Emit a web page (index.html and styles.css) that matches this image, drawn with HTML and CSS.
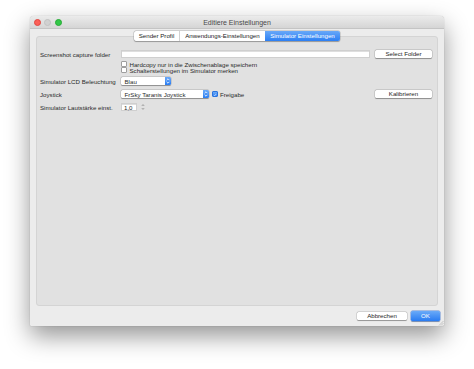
FILE: index.html
```html
<!DOCTYPE html>
<html lang="de">
<head>
<meta charset="utf-8">
<title>Editiere Einstellungen</title>
<link rel="stylesheet" href="styles.css">
</head>
<body>
<div class="stage">
  <div class="window">
    <div class="titlebar">
      <div class="lights">
        <span class="light red"></span>
        <span class="light gray"></span>
        <span class="light green"></span>
      </div>
      <div class="title">Editiere Einstellungen</div>
      <div></div>
    </div>
    <div class="tabs">
      <div class="tab">Sender Profil</div>
      <div class="tab">Anwendungs-Einstellungen</div>
      <div class="tab active">Simulator Einstellungen</div>
    </div>
    <div class="panel">
      <div class="row r1">
        <div class="label">Screenshot capture folder</div>
        <div class="input grow"></div>
        <div class="button side">Select Folder</div>
      </div>
      <div class="check-row c1">
        <span class="checkbox"></span><span>Hardcopy nur in die Zwischenablage speichern</span>
      </div>
      <div class="check-row">
        <span class="checkbox"></span><span>Schalterstellungen im Simulator merken</span>
      </div>
      <div class="row r3">
        <div class="label">Simulator LCD Beleuchtung</div>
        <div class="select s-blau"><span class="sel-text">Blau</span><span class="stepper"><svg viewBox="0 0 6 8" width="6" height="8"><path d="M1.6 3.2 L3 1.8 L4.4 3.2 M1.6 4.8 L3 6.2 L4.4 4.8" fill="none" stroke="#fff" stroke-width="0.8"/></svg></span></div>
      </div>
      <div class="row r4">
        <div class="label">Joystick</div>
        <div class="select s-joy"><span class="sel-text">FrSky Taranis Joystick</span><span class="stepper"><svg viewBox="0 0 6 8" width="6" height="8"><path d="M1.6 3.2 L3 1.8 L4.4 3.2 M1.6 4.8 L3 6.2 L4.4 4.8" fill="none" stroke="#fff" stroke-width="0.8"/></svg></span></div>
        <span class="checkbox checked"><svg viewBox="0 0 6 6" width="6" height="6"><path d="M1.3 3.1 L2.5 4.3 L4.8 1.5" fill="none" stroke="#fff" stroke-width="0.9"/></svg></span>
        <span class="freigabe">Freigabe</span>
        <div class="grow"></div>
        <div class="button side">Kalibrieren</div>
      </div>
      <div class="row r5">
        <div class="label">Simulator Lautstärke einst.</div>
        <div class="input spin">1,0</div>
        <span class="spin-arrows"><svg viewBox="0 0 4 8" width="4" height="8"><path d="M0.8 3 L2 1.6 L3.2 3 M0.8 5 L2 6.4 L3.2 5" fill="none" stroke="#777" stroke-width="0.6"/></svg></span>
      </div>
    </div>
    <div class="footer">
      <div class="button cancel">Abbrechen</div>
      <div class="button ok">OK</div>
    </div>
    <svg class="grip" viewBox="0 0 6 6" width="6" height="6"><path d="M5.5 1 L1 5.5 M5.5 3 L3 5.5 M5.5 5 L5 5.5" stroke="#9a9a9a" stroke-width="0.5"/></svg>
  </div>
</div>
</body>
</html>
```

FILE: styles.css
```css
* { box-sizing: border-box; }
html, body {
  margin: 0;
  padding: 0;
  background: #ffffff;
  width: 474px;
  height: 369px;
  overflow: hidden;
}
body {
  font-family: "Liberation Sans", Arial, sans-serif;
  font-size: 6.15px;
  color: #2a2a2a;
}
.stage {
  padding: 16px 0 0 30px;
}
.window {
  position: relative;
  width: 414px;
  height: 310px;
  background: #ececec;
  border-radius: 4px 4px 1px 1px;
  box-shadow: 0 10px 24px rgba(0,0,0,0.42), 0 0 1px rgba(0,0,0,0.35);
  display: flex;
  flex-direction: column;
}
.titlebar {
  height: 13px;
  flex: none;
  display: grid;
  grid-template-columns: 1fr auto 1fr;
  align-items: center;
  background: linear-gradient(#ebebeb, #d5d5d5);
  border-bottom: 1px solid #c4c4c4;
  border-radius: 4px 4px 0 0;
}
.lights {
  display: flex;
  gap: 3.5px;
  padding-left: 3.5px;
  align-items: center;
}
.light {
  width: 7px;
  height: 7px;
  border-radius: 50%;
}
.light.red { background: #fc5f57; border: 0.5px solid #e04640; }
.light.gray { background: #d1d1d1; border: 0.5px solid #c2c2c2; }
.light.green { background: #33c748; border: 0.5px solid #27aa35; }
.title {
  font-size: 7px;
  color: #4a4a4a;
  line-height: 13px;
}
.tabs {
  position: relative;
  z-index: 1;
  flex: none;
  align-self: center;
  display: flex;
  height: 10px;
  margin-top: 2px;
  background: #fff;
  border-radius: 2px;
  box-shadow: 0 0 0 0.5px rgba(0,0,0,0.2), 0 0.5px 1px rgba(0,0,0,0.25);
}
.tab {
  padding: 0 5px;
  line-height: 10px;
  border-left: 0.5px solid #d2d2d2;
  color: #222;
}
.tab:first-child { border-left: none; }
.tab.active {
  background: linear-gradient(#68a8f8, #2c7ff3);
  color: #fff;
  border-left: none;
  border-radius: 0 2px 2px 0;
  padding: 0 5.5px;
}
.panel {
  flex: 1;
  margin: -5px 6px 0 6px;
  background: #e1e1e1;
  border: 1px solid #d4d4d4;
  border-radius: 3px;
  padding: 13px 5px 0 3px;
  display: flex;
  flex-direction: column;
}
.row {
  display: flex;
  align-items: center;
  height: 8px;
}
.label {
  width: 81px;
  flex: none;
  white-space: nowrap;
}
.grow { flex: 1; }
.input {
  height: 8px;
  background: #fff;
  border: 0.5px solid #cfcfcf;
  box-shadow: inset 0 0.5px 0 #bdbdbd;
}
.button {
  height: 8px;
  line-height: 8px;
  background: #fff;
  text-align: center;
  border-radius: 1.5px;
  box-shadow: 0 0 0 0.5px rgba(0,0,0,0.18), 0 0.5px 0.8px rgba(0,0,0,0.3);
  color: #1c1c1c;
}
.side {
  width: 57px;
  margin-left: 5px;
  flex: none;
}
.check-row {
  display: flex;
  align-items: center;
  height: 6px;
  padding-left: 81px;
  gap: 2.5px;
  white-space: nowrap;
}
.check-row.c1 { margin-top: 3px; }
.checkbox {
  width: 6px;
  height: 6px;
  flex: none;
  background: #fff;
  border: 0.5px solid #9e9e9e;
  border-radius: 1px;
  display: inline-flex;
}
.checkbox.checked {
  background: linear-gradient(#6aaaf8, #2f80f2);
  border-color: #2a74de;
  margin-left: 3px;
}
.freigabe { margin-left: 2px; }
.r3 { margin-top: 4px; }
.r4 { margin-top: 5px; }
.r5 { margin-top: 5px; }
.select {
  height: 8px;
  display: flex;
  align-items: center;
  justify-content: space-between;
  background: #fff;
  border-radius: 1.5px;
  box-shadow: 0 0 0 0.5px rgba(0,0,0,0.18), 0 0.5px 0.8px rgba(0,0,0,0.3);
  flex: none;
}
.s-blau { width: 50px; }
.s-joy { width: 88px; }
.sel-text {
  padding-left: 3.5px;
  white-space: nowrap;
}
.stepper {
  width: 6px;
  height: 8px;
  background: linear-gradient(#69a9f8, #2a7df2);
  border-radius: 0 1.5px 1.5px 0;
  display: flex;
}
.spin {
  width: 16px;
  padding-left: 2px;
  line-height: 7.5px;
  height: 8px;
}
.spin-arrows {
  display: flex;
  margin-left: 4px;
}
.footer {
  flex: none;
  height: 20px;
  display: flex;
  justify-content: flex-end;
  align-items: center;
  gap: 4px;
  padding-right: 4px;
}
.cancel { width: 50px; }
.ok {
  width: 29px;
  height: 10px;
  line-height: 10px;
  background: linear-gradient(#6aaaf8, #2a7cf2);
  color: #fff;
  box-shadow: 0 0 0 0.5px rgba(20,90,210,0.6), 0 0.5px 0.8px rgba(0,0,0,0.3);
}
.grip {
  position: absolute;
  right: 0;
  bottom: 0;
}
```
